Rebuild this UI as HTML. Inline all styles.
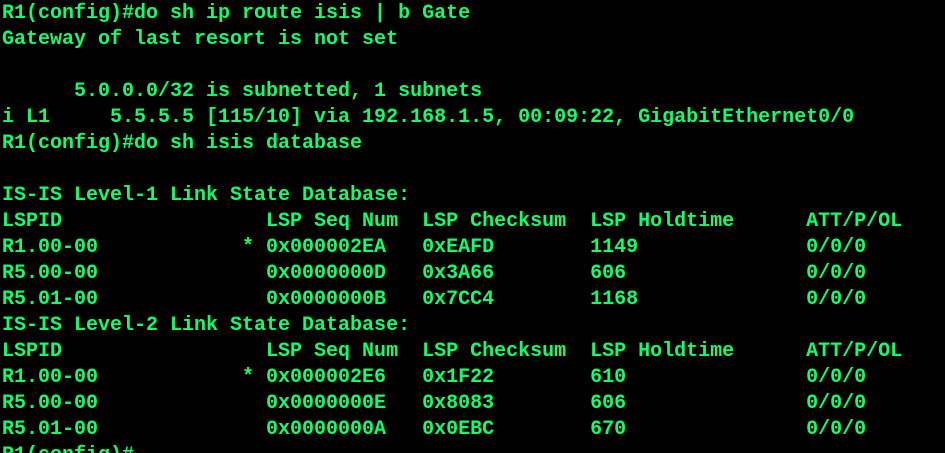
<!DOCTYPE html>
<html><head><meta charset="utf-8"><style>
html,body{margin:0;padding:0;background:#000;width:945px;height:453px;overflow:hidden}
pre{margin:0;padding:1px 0 0 2px;font-family:"Liberation Mono",monospace;font-size:20px;line-height:26px;color:#10ff66;font-weight:bold;white-space:pre}
</style></head><body><pre>R1(config)#do sh ip route isis | b Gate
Gateway of last resort is not set

      5.0.0.0/32 is subnetted, 1 subnets
i L1     5.5.5.5 [115/10] via 192.168.1.5, 00:09:22, GigabitEthernet0/0
R1(config)#do sh isis database

IS-IS Level-1 Link State Database:
LSPID                 LSP Seq Num  LSP Checksum  LSP Holdtime      ATT/P/OL
R1.00-00            * 0x000002EA   0xEAFD        1149              0/0/0
R5.00-00              0x0000000D   0x3A66        606               0/0/0
R5.01-00              0x0000000B   0x7CC4        1168              0/0/0
IS-IS Level-2 Link State Database:
LSPID                 LSP Seq Num  LSP Checksum  LSP Holdtime      ATT/P/OL
R1.00-00            * 0x000002E6   0x1F22        610               0/0/0
R5.00-00              0x0000000E   0x8083        606               0/0/0
R5.01-00              0x0000000A   0x0EBC        670               0/0/0
R1(config)#</pre></body></html>
